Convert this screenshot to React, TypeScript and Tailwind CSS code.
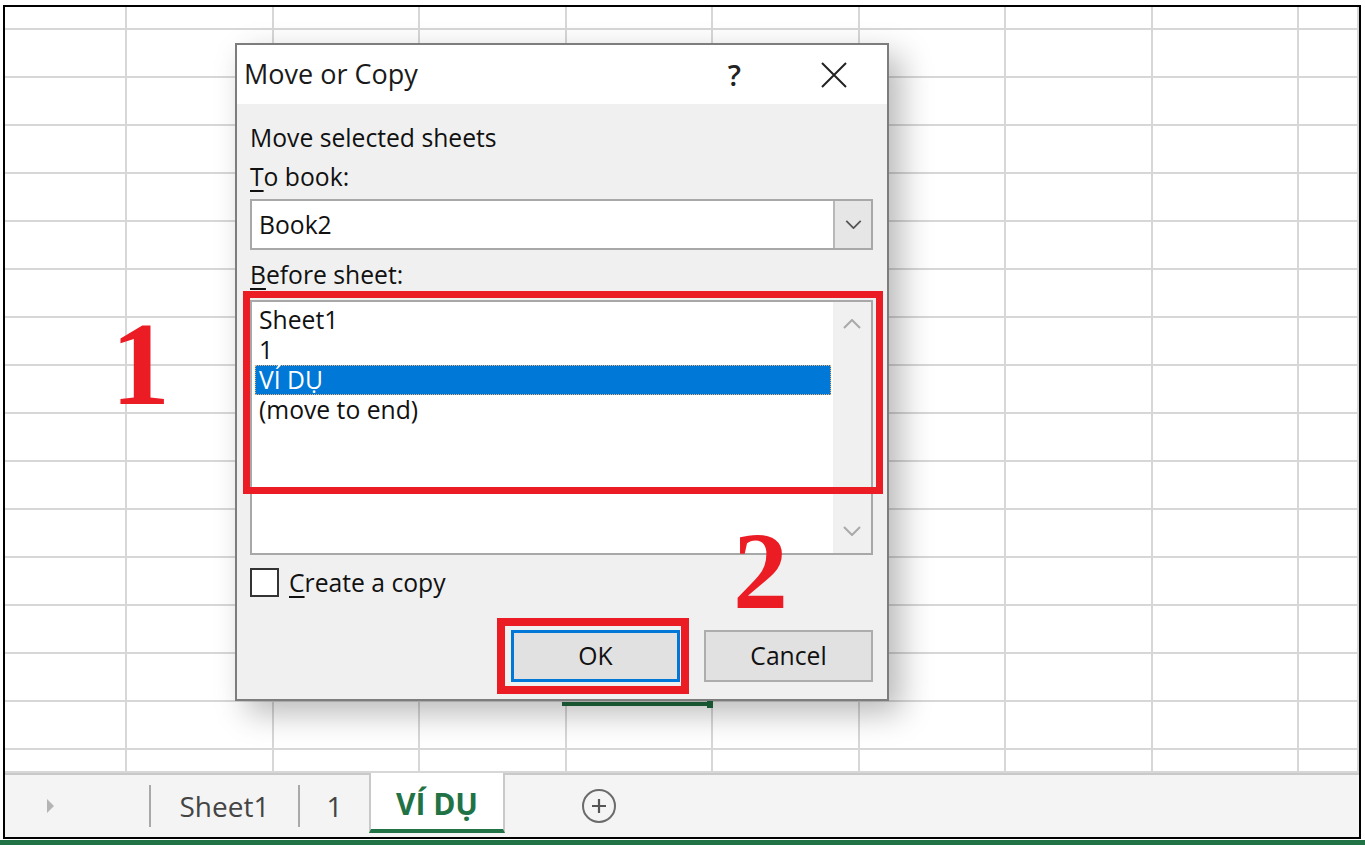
import React from "react"

const ROWS = 17
const COLS = 10

function Chevron({ up, className }: { up?: boolean; className: string }) {
  return (
    <svg viewBox="0 0 18 10" className={className} fill="none" stroke="currentColor" strokeWidth={2}>
      {up ? <path d="M1 9 L9 1 L17 9" /> : <path d="M1 1 L9 9 L17 1" />}
    </svg>
  )
}

function Sheet() {
  const cells = []
  for (let r = 0; r < ROWS; r++) {
    for (let c = 0; c < COLS; c++) {
      cells.push(<div key={`${r}-${c}`} className="border-r-2 border-b-2 border-[#d7d7d7]" />)
    }
  }
  return (
    <div className="grid flex-1 overflow-hidden grid-cols-[122px_repeat(8,146.5px)_1fr] grid-rows-[23px_repeat(15,48px)_1fr]">
      {cells}
    </div>
  )
}

function TabBar() {
  return (
    <div className="flex h-[64px] shrink-0 border-t-2 border-[#c9c9c9] bg-[#f4f4f4] text-[28px] text-[#444]">
      <div className="flex w-[144px] items-center pl-[42px]">
        <div className="h-0 w-0 border-y-[7px] border-l-[7px] border-y-transparent border-l-[#b4b4b4]" />
      </div>
      <div className="my-[10px] w-[2px] bg-[#a9a9a9]" />
      <div className="flex w-[147px] items-center justify-center">Sheet1</div>
      <div className="my-[10px] w-[2px] bg-[#a9a9a9]" />
      <div className="flex w-[69px] items-center justify-center">1</div>
      <div className="-mt-[2px] mb-[4px] flex w-[136px] items-center justify-center border-x-2 border-b-4 border-x-[#c9c9c9] border-b-[#217346] bg-white pt-[4px] text-[30px] font-bold text-[#217346]">
        VÍ DỤ
      </div>
      <div className="ml-[77px] flex items-center">
        <div className="flex h-[34px] w-[34px] items-center justify-center rounded-full border-2 border-[#6b6b6b]">
          <svg viewBox="0 0 16 16" className="h-[16px] w-[16px]" stroke="#555" strokeWidth={2.2}>
            <path d="M8 1 V15 M1 8 H15" />
          </svg>
        </div>
      </div>
    </div>
  )
}

function Dialog() {
  const items = ["Sheet1", "1", "VÍ DỤ", "(move to end)"]
  return (
    <div className="absolute left-[235px] top-[43px] flex h-[658px] w-[654px] flex-col border-2 border-[#7d7d7d] bg-[#f0f0f0] shadow-[12px_12px_30px_rgba(0,0,0,0.28)]">
      <div className="flex h-[59px] shrink-0 items-center bg-white pl-[7px] text-[27px] text-[#1a1a1a]">
        <span>Move or Copy</span>
        <span className="ml-auto mr-[80px] text-[29px] font-semibold text-[#222]">?</span>
        <svg viewBox="0 0 26 26" className="mr-[40px] h-[26px] w-[26px]" stroke="#222" strokeWidth={2}>
          <path d="M1 1 L25 25 M25 1 L1 25" />
        </svg>
      </div>
      <div className="flex flex-1 flex-col pl-[13px] pr-[14px] pt-[19px] text-[24.7px] text-[#111]">
        <div className="h-[30px] leading-[30px]">Move selected sheets</div>
        <div className="mt-[9px] h-[30px] leading-[30px]">
          <span className="underline underline-offset-[4px]">T</span>o book:
        </div>
        <div className="mt-[7px] flex h-[51px] border-2 border-[#a8a8a8] bg-white">
          <div className="flex flex-1 items-center pl-[7px]">Book2</div>
          <div className="flex w-[38px] items-center justify-center border-l-2 border-[#b8b8b8] bg-[#e6e6e6] text-[#555]">
            <Chevron className="h-[9px] w-[17px]" />
          </div>
        </div>
        <div className="mt-[10px] h-[30px] leading-[30px]">
          <span className="underline underline-offset-[4px]">B</span>efore sheet:
        </div>
        <div className="mt-[10px] flex h-[255px] border-2 border-[#a8a8a8] bg-white">
          <div className="flex-1 pl-[3px] pr-[2px] pt-[3px]">
            {items.map((it) => (
              <div
                key={it}
                className={
                  it === "VÍ DỤ"
                    ? "h-[30px] border border-dotted border-[#f0b070] bg-[#0078d7] pl-[3px] leading-[28px] text-white"
                    : "h-[30px] pl-[4px] leading-[30px]"
                }
              >
                {it}
              </div>
            ))}
          </div>
          <div className="flex w-[38px] flex-col items-center justify-between bg-[#f0f0f0] py-[17px] text-[#a9a9a9]">
            <Chevron up className="h-[10px] w-[18px]" />
            <Chevron className="h-[10px] w-[18px]" />
          </div>
        </div>
        <div className="mt-[13px] flex h-[29px] items-center">
          <div className="h-[29px] w-[29px] border-2 border-[#333] bg-white" />
          <div className="ml-[10px]">
            <span className="underline underline-offset-[4px]">C</span>reate a copy
          </div>
        </div>
        <div className="mt-[33px] flex justify-end gap-[24px]">
          <div className="flex h-[52px] w-[169px] items-center justify-center border-[3px] border-[#0078d7] bg-[#e1e1e1]">
            OK
          </div>
          <div className="flex h-[52px] w-[169px] items-center justify-center border-2 border-[#adadad] bg-[#e1e1e1]">
            Cancel
          </div>
        </div>
      </div>
    </div>
  )
}

export default function App() {
  return (
    <div className="relative h-[851px] w-[1365px] overflow-hidden bg-white font-['Open_Sans',sans-serif]">
      <div className="ml-[3px] mt-[5px] flex h-[834px] w-[1358px] flex-col border-2 border-black">
        <Sheet />
        <TabBar />
      </div>
      <div className="mt-[1px] h-[5px] bg-[#217346]" />

      {/* selected cell edge peeking below the dialog */}
      <div className="absolute left-[562px] top-[702px] h-[4px] w-[146px] bg-[#1e6b3f]" />
      <div className="absolute left-[707px] top-[701px] h-[7px] w-[6px] bg-[#1e6b3f]" />

      <Dialog />

      {/* annotations */}
      <div className="pointer-events-none absolute left-[243px] top-[291px] h-[203px] w-[640px] border-[7px] border-[#ec1c24]" />
      <div className="pointer-events-none absolute left-[497px] top-[618px] h-[76px] w-[192px] border-[8px] border-[#ec1c24]" />
      <div className="absolute left-[111px] top-[306px] font-['Liberation_Serif',serif] text-[118px] font-bold leading-none text-[#ec1c24]">
        1
      </div>
      <div className="absolute left-[733px] top-[516px] font-['Liberation_Serif',serif] text-[110px] font-bold leading-none text-[#ec1c24]">
        2
      </div>
    </div>
  )
}
